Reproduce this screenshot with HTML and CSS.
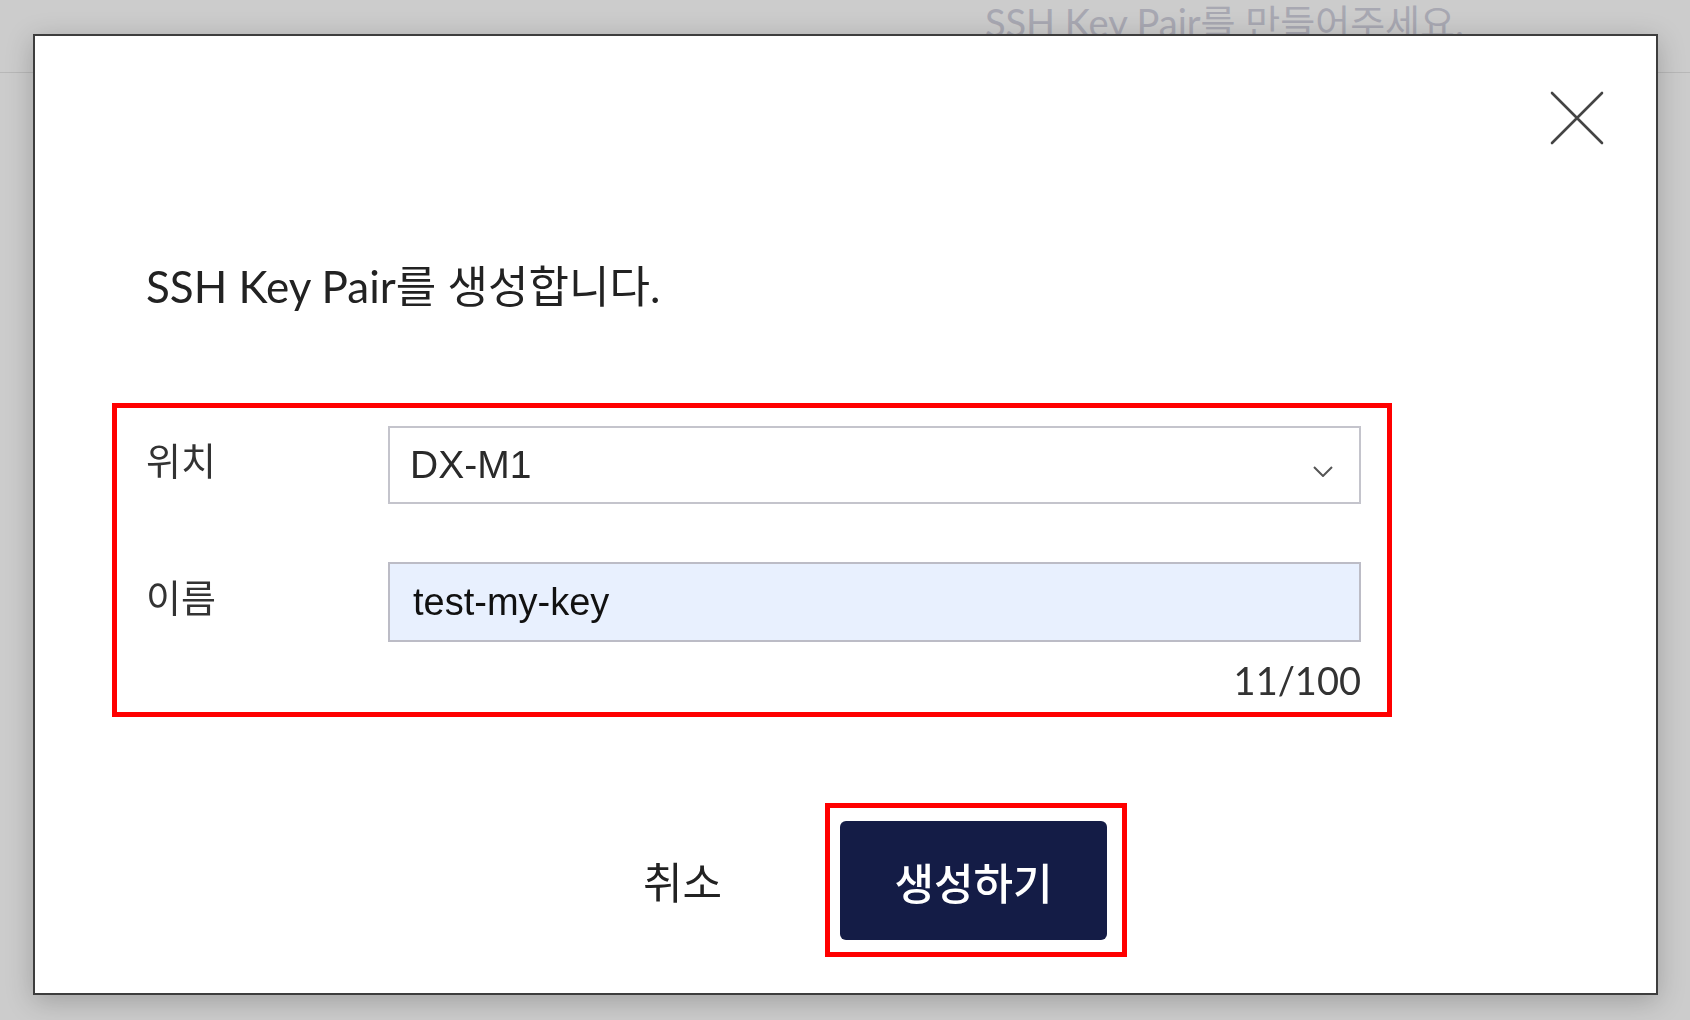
FILE: index.html
```html
<!DOCTYPE html>
<html lang="ko">
<head>
<meta charset="utf-8">
<title>SSH Key Pair</title>
<link rel="stylesheet" href="styles.css">
</head>
<body>
<div class="page">
  <header class="bg-header"><span class="bg-title">SSH Key Pair를 만들어주세요.</span></header>
</div>
<div class="modal" role="dialog">
  <div class="modal-top">
    <button class="close" aria-label="닫기">
      <svg width="54" height="54" viewBox="0 0 54 54"><path d="M2 2 L52 52 M52 2 L2 52" stroke="#444" stroke-width="2.6" stroke-linecap="round" fill="none"/></svg>
    </button>
  </div>
  <h2 class="modal-title">SSH Key Pair를 생성합니다.</h2>
  <div class="form-box">
    <div class="row">
      <div class="label">위치</div>
      <div class="select">
        <span class="value">DX-M1</span>
        <svg class="chevron" width="20" height="11" viewBox="0 0 20 11"><path d="M1 1 L10 10 L19 1" stroke="#555" stroke-width="2" fill="none"/></svg>
      </div>
    </div>
    <div class="row row-name">
      <div class="label">이름</div>
      <div class="input">test-my-key</div>
    </div>
    <div class="counter">11/100</div>
  </div>
  <div class="actions">
    <button class="cancel">취소</button>
    <div class="primary-wrap"><button class="primary">생성하기</button></div>
  </div>
</div>
</body>
</html>
```
FILE: styles.css
```css
html, body {
  margin: 0;
  padding: 0;
}
body {
  width: 1690px;
  height: 1020px;
  overflow: hidden;
  background: #cccccc;
  font-family: Lato, "Noto Sans CJK KR", sans-serif;
}
.bg-header {
  height: 72px;
  border-bottom: 1px solid #b8b8b8;
  display: flex;
  justify-content: flex-end;
  padding-right: 226px;
}
.bg-title {
  font-size: 38px;
  line-height: 44px;
  color: #a8a8b2;
}
.modal {
  position: fixed;
  left: 33px;
  top: 34px;
  width: 1625px;
  height: 961px;
  box-sizing: border-box;
  border: 2px solid #3d3d3d;
  background: #ffffff;
  box-shadow: 0 6px 26px rgba(0, 0, 0, 0.22);
  padding: 0 52px 0 77px;
}
.modal-top {
  display: flex;
  justify-content: flex-end;
  padding-top: 55px;
}
.close {
  width: 54px;
  height: 54px;
  padding: 0;
  border: none;
  background: none;
  display: block;
}
.close svg {
  display: block;
}
.modal-title {
  margin: 116px 0 0 34px;
  font-size: 44px;
  line-height: 50px;
  font-weight: 400;
  color: #222222;
}
.form-box {
  margin-top: 92px;
  width: 1280px;
  box-sizing: border-box;
  border: 5px solid #ff0000;
  padding: 18px 26px 12px 29px;
}
.row {
  display: flex;
  align-items: center;
}
.row-name {
  margin-top: 58px;
}
.label {
  width: 242px;
  flex: none;
  font-family: "Noto Sans CJK KR", sans-serif;
  font-size: 38px;
  line-height: 40px;
  color: #333333;
  padding-bottom: 12px;
}
.select {
  flex: 1;
  height: 78px;
  box-sizing: border-box;
  border: 2px solid #c4c4cc;
  display: flex;
  align-items: center;
  justify-content: space-between;
  padding: 0 26px 0 20px;
  font-family: "Liberation Sans", Arial, sans-serif;
  font-size: 39px;
  color: #2a2a2a;
}
.chevron {
  margin-top: 12px;
  display: block;
}
.input {
  flex: 1;
  height: 80px;
  box-sizing: border-box;
  border: 2px solid #bcbcc6;
  background: #e8f0fe;
  display: flex;
  align-items: center;
  padding-left: 23px;
  font-family: "Liberation Sans", Arial, sans-serif;
  font-size: 38px;
  color: #111111;
}
.counter {
  margin-top: 18px;
  text-align: right;
  font-size: 38px;
  line-height: 40px;
  color: #333333;
}
.actions {
  margin-top: 86px;
  display: flex;
  align-items: center;
  padding-left: 437px;
}
.cancel {
  width: 267px;
  height: 119px;
  padding: 0;
  border: none;
  background: none;
  font-family: "Noto Sans CJK KR", sans-serif;
  font-size: 43px;
  color: #222222;
}
.primary-wrap {
  margin-left: 9px;
  border: 5px solid #ff0000;
  padding: 13px 15px 12px 10px;
}
.primary {
  display: block;
  width: 267px;
  height: 119px;
  padding: 0;
  border: none;
  border-radius: 6px;
  background: #141c46;
  color: #ffffff;
  font-family: "Noto Sans CJK KR", sans-serif;
  font-size: 43px;
  font-weight: 500;
}
```
